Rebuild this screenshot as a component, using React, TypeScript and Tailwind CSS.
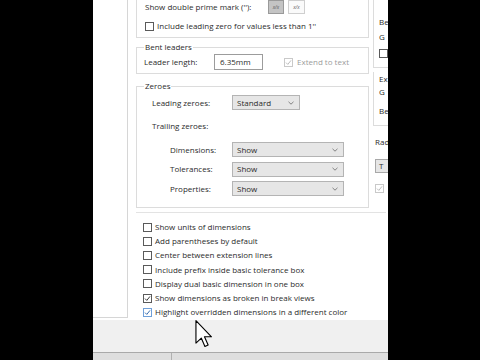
import React from "react";

function Check({ checked = false, blue = false, disabled = false }: { checked?: boolean; blue?: boolean; disabled?: boolean }) {
  const border = blue ? "border-[#6f9fd8]" : disabled ? "border-[#c9c9c9]" : "border-[#5a5a5a]";
  const stroke = blue ? "#3b6fb0" : disabled ? "#bdbdbd" : "#3a3a3a";
  return (
    <span className={`w-[9px] h-[9px] border ${border} bg-white flex items-center justify-center shrink-0`}>
      {checked && (
        <svg width="7" height="7" viewBox="0 0 7 7">
          <polyline points="1,3.6 2.8,5.4 6,1.4" fill="none" stroke={stroke} strokeWidth="1" />
        </svg>
      )}
    </span>
  );
}

function Select({ value, w }: { value: string; w: string }) {
  return (
    <div className={`${w} h-[15px] bg-[#e6e6e6] border border-[#b4b4b4] flex items-center pl-[4px] pr-[5px]`}>
      <span className="flex-1">{value}</span>
      <svg width="6" height="4" viewBox="0 0 6 4">
        <polyline points="0.5,0.8 3,3.2 5.5,0.8" fill="none" stroke="#777" strokeWidth="0.9" />
      </svg>
    </div>
  );
}

const items: { label: string; checked?: boolean; blue?: boolean }[] = [
  { label: "Show units of dimensions" },
  { label: "Add parentheses by default" },
  { label: "Center between extension lines" },
  { label: "Include prefix inside basic tolerance box" },
  { label: "Display dual basic dimension in one box" },
  { label: "Show dimensions as broken in break views", checked: true },
  { label: "Highlight overridden dimensions in a different color", checked: true, blue: true },
];

export default function App() {
  return (
    <div className="w-[480px] h-[360px] bg-black overflow-hidden flex relative font-['Open_Sans',sans-serif] text-[8px] leading-[10px] text-[#2b2b2b]">
      <div className="ml-[93px] w-[295px] h-[360px] flex flex-col bg-white">
        <div className="h-[320px] flex">
          {/* left strip */}
          <div className="w-[35px] h-[318px] border-r border-b border-[#d6d6d6]" />
          <div className="w-[8px]" />
          {/* main column */}
          <div className="w-[233px] flex flex-col">
            {/* group 1 (top cut) */}
            <div className="h-[38px] border-x border-b border-[#dcdcdc] pl-[8px]">
              <div className="h-[14px] flex items-center">
                <span className="w-[123px]">Show double prime mark (''):</span>
                <span className="w-[16px] h-[14px] bg-[#c4c4c4] border border-[#9a9a9a] flex items-center justify-center text-[5px] italic text-[#555]">x/x</span>
                <span className="ml-[4px] w-[17px] h-[14px] bg-[#fafafa] border border-[#cfcfcf] flex items-center justify-center text-[5px] italic text-[#555]">x/x</span>
              </div>
              <div className="mt-[7px] flex items-center gap-[3px]">
                <Check />
                <span>Include leading zero for values less than 1''</span>
              </div>
            </div>
            {/* group 2 */}
            <fieldset className="mt-[4px] border border-[#dcdcdc] pl-[7px] pb-[3px]">
              <legend className="px-[1px]">Bent leaders</legend>
              <div className="mt-[2px] h-[16px] flex items-center">
                <span className="w-[70px]">Leader length:</span>
                <div className="w-[49px] h-[16px] border border-[#9c9c9c] flex items-center pl-[5px]">6.35mm</div>
                <span className="ml-[21px]"><Check checked disabled /></span>
                <span className="ml-[4px] text-[#9c9c9c]">Extend to text</span>
              </div>
            </fieldset>
            {/* group 3 */}
            <fieldset className="mt-[7px] border border-[#dcdcdc] pl-[7px] pb-[11px]">
              <legend className="px-[1px]">Zeroes</legend>
              <div className="mt-[4px] h-[15px] flex items-center pl-[8px]">
                <span className="w-[80px]">Leading zeroes:</span>
                <Select value="Standard" w="w-[68px]" />
              </div>
              <div className="mt-[11px] h-[10px] flex items-center pl-[8px]">Trailing zeroes:</div>
              <div className="mt-[11px] flex flex-col gap-[4px] pl-[26px]">
                <div className="h-[15px] flex items-center">
                  <span className="w-[62px]">Dimensions:</span>
                  <Select value="Show" w="w-[112px]" />
                </div>
                <div className="h-[16px] flex items-center">
                  <span className="w-[62px]">Tolerances:</span>
                  <Select value="Show" w="w-[112px]" />
                </div>
                <div className="h-[15px] flex items-center">
                  <span className="w-[62px]">Properties:</span>
                  <Select value="Show" w="w-[112px]" />
                </div>
              </div>
            </fieldset>
            <div className="mt-[4px] h-px bg-[#e3e3e3] w-[250px]" />
            {/* checkbox list */}
            <div className="mt-[7px] pl-[7px] flex flex-col">
              {items.map((it) => (
                <div key={it.label} className="h-[14.2px] flex items-center gap-[3px]">
                  <Check checked={it.checked} blue={it.blue} />
                  <span>{it.label}</span>
                </div>
              ))}
            </div>
          </div>
          <div className="w-[4px]" />
          {/* right column (clipped by the video frame) */}
          <div className="flex-1 overflow-hidden whitespace-nowrap">
            <div className="h-[68px] border-l border-b border-[#dcdcdc] pl-[5px] pt-[17px] flex flex-col">
              <span className="h-[10px]">Be</span>
              <span className="mt-[5px] h-[10px]">G</span>
              <span className="mt-[7px]"><Check /></span>
            </div>
            <div className="mt-[4px] h-[54px] border-l border-b border-[#dcdcdc] pl-[5px] pt-[2px] flex flex-col">
              <span className="h-[10px]">Ex</span>
              <span className="mt-[3px] h-[10px]">G</span>
              <span className="mt-[9px] h-[10px]">Be</span>
            </div>
            <div className="mt-[11px] h-[10px] pl-[2px]">Rad</div>
            <div className="mt-[12px] ml-[2px] w-[14px] h-[14px] border border-[#a8a8a8] bg-[#e6e6e6] pl-[3px] flex items-center">T</div>
            <div className="mt-[11px] ml-[2px]"><Check checked disabled /></div>
          </div>
        </div>
        {/* bottom bar */}
        <div className="h-[32px] bg-[#f0f0f0]" />
        <div className="h-px bg-[#a9a9a9]" />
        <div className="flex-1 bg-[#dedede] flex">
          <div className="w-[79px] border-r border-[#b0b0b0]" />
        </div>
      </div>
      {/* mouse cursor */}
      <svg className="absolute left-[195px] top-[320px]" width="18" height="28" viewBox="0 0 12.5 20">
        <path d="M0.5,0.5 L0.5,16.5 L4.3,12.9 L6.9,18.9 L9.2,17.9 L6.6,12 L11.6,12 Z" fill="#fff" stroke="#000" strokeWidth="0.8" strokeLinejoin="round" />
      </svg>
    </div>
  );
}
